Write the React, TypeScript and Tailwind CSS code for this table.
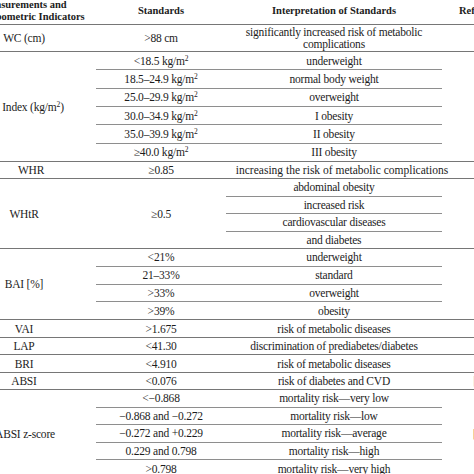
import React from "react";

type Sub = { s: React.ReactNode; i: React.ReactNode };

const M2 = () => (
  <>
    kg/m<sup className="text-[7.5px] top-[-4px]">2</sup>
  </>
);

const Line = "border-b border-[#767676]";
const SubLine = "border-b border-[#8e8e8e]";

function Cell1({ children, cls = "" }: { children: React.ReactNode; cls?: string }) {
  return (
    <div className={"w-[144px] shrink-0 flex items-center justify-center whitespace-nowrap " + cls}>{children}</div>
  );
}

function RefCell({ children, cls = "" }: { children?: React.ReactNode; cls?: string }) {
  return <div className={"w-[98px] shrink-0 flex items-center justify-start pl-[31px] " + cls}>{children}</div>;
}

function Subrows({ rows }: { rows: Sub[] }) {
  return (
    <div className="w-[346px] shrink-0 flex flex-col">
      {rows.map((r, k) => (
        <div key={k} className={"flex-1 flex " + (k < rows.length - 1 ? SubLine : "")}>
          <div className="w-[130px] shrink-0 flex items-center justify-center whitespace-nowrap">{r.s}</div>
          <div className="w-[216px] shrink-0 flex items-center justify-center whitespace-nowrap">{r.i}</div>
        </div>
      ))}
    </div>
  );
}

function Simple({
  h,
  name,
  s,
  i,
  nameCls = "",
  ref_,
}: {
  h: string;
  name: React.ReactNode;
  s: React.ReactNode;
  i: React.ReactNode;
  nameCls?: string;
  ref_?: React.ReactNode;
}) {
  return (
    <div className={"flex " + Line + " " + h}>
      <Cell1 cls={nameCls}>{name}</Cell1>
      <div className="w-[130px] shrink-0 flex items-center justify-center whitespace-nowrap">{s}</div>
      <div className="w-[216px] shrink-0 flex items-center justify-center whitespace-nowrap">{i}</div>
      <RefCell>{ref_}</RefCell>
    </div>
  );
}

export default function App() {
  return (
    <div className="w-[474px] h-[474px] overflow-hidden bg-white">
      <div className="-ml-[48px] w-[588px] font-['Liberation_Serif',serif] text-[11.5px] tracking-[-0.2px] text-[#1c1c1c] leading-[12px]">
        {/* header */}
        <div className={"flex h-[25px] font-bold text-[10.5px] tracking-normal pb-[2px] " + Line}>
          <div className="w-[144px] shrink-0 flex items-center justify-center">
            <div className="text-center leading-[12px] whitespace-nowrap">
              Measurements and
              <br />
              Anthropometric Indicators
            </div>
          </div>
          <div className="w-[130px] shrink-0 flex items-center justify-center">Standards</div>
          <div className="w-[216px] shrink-0 flex items-center justify-center">Interpretation of Standards</div>
          <div className="w-[98px] shrink-0 flex items-center justify-start pl-[17px]">References</div>
        </div>

        {/* WC */}
        <Simple
          h="h-[27px]"
          name="WC (cm)"
          s=">88 cm"
          i={
            <div className="text-center leading-[12px]">
              significantly increased risk of metabolic
              <br />
              complications
            </div>
          }
        />

        {/* Index */}
        <div className={"flex h-[110px] " + Line}>
          <Cell1 cls="pl-[18px]">
            <span>
              Index (<M2 />)
            </span>
          </Cell1>
          <Subrows
            rows={[
              { s: <span>&lt;18.5 <M2 /></span>, i: "underweight" },
              { s: <span>18.5–24.9 <M2 /></span>, i: "normal body weight" },
              { s: <span>25.0–29.9 <M2 /></span>, i: "overweight" },
              { s: <span>30.0–34.9 <M2 /></span>, i: "I obesity" },
              { s: <span>35.0–39.9 <M2 /></span>, i: "II obesity" },
              { s: <span>≥40.0 <M2 /></span>, i: "III obesity" },
            ]}
          />
          <RefCell />
        </div>

        {/* WHR */}
        <Simple
          h="h-[17px]"
          name="WHR"
          nameCls="pl-[14px]"
          s="≥0.85"
          i={<span className="pl-[16px] tracking-[0px]">increasing the risk of metabolic complications</span>}
        />

        {/* WHtR */}
        <div className={"flex h-[70px] " + Line}>
          <Cell1>WHtR</Cell1>
          <div className="w-[130px] shrink-0 flex items-center justify-center">≥0.5</div>
          <div className="w-[216px] shrink-0 flex flex-col">
            {["abdominal obesity", "increased risk", "cardiovascular diseases", "and diabetes"].map((t, k) => (
              <div key={k} className={"flex-1 flex items-center justify-center " + (k < 3 ? SubLine : "")}>
                {t}
              </div>
            ))}
          </div>
          <RefCell />
        </div>

        {/* BAI */}
        <div className={"flex h-[71px] " + Line}>
          <Cell1>BAI [%]</Cell1>
          <Subrows
            rows={[
              { s: "<21%", i: "underweight" },
              { s: "21–33%", i: "standard" },
              { s: ">33%", i: "overweight" },
              { s: ">39%", i: "obesity" },
            ]}
          />
          <RefCell />
        </div>

        <Simple h="h-[18px]" name="VAI" s=">1.675" i="risk of metabolic diseases" />
        <Simple h="h-[17px]" name="LAP" s="<41.30" i="discrimination of prediabetes/diabetes" />
        <Simple h="h-[18px]" name="BRI" s="<4.910" i="risk of metabolic diseases" />
        <Simple
          h="h-[17px]"
          name="ABSI"
          s="<0.076"
          i="risk of diabetes and CVD"
          ref_={<span className="text-[#c4c4c4]">[47,48]</span>}
        />

        {/* ABSI z-score */}
        <div className={"flex h-[88px] " + Line}>
          <Cell1 cls="pl-[2px]">ABSI z-score</Cell1>
          <Subrows
            rows={[
              { s: "<−0.868", i: "mortality risk—very low" },
              { s: "−0.868 and −0.272", i: "mortality risk—low" },
              { s: "−0.272 and +0.229", i: "mortality risk—average" },
              { s: "0.229 and 0.798", i: "mortality risk—high" },
              { s: ">0.798", i: "mortality risk—very high" },
            ]}
          />
          <RefCell>
            <span className="font-bold text-[12px] text-[#111]">[49,50]</span>
          </RefCell>
        </div>
      </div>
    </div>
  );
}
